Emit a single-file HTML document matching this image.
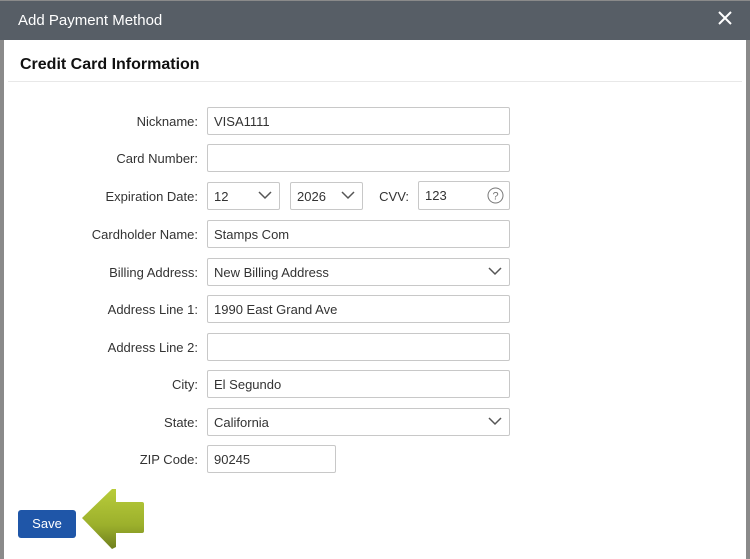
<!DOCTYPE html>
<html><head><style>
body{margin:0;width:750px;height:559px;overflow:hidden;background:#fff;font-family:"Liberation Sans",sans-serif;position:relative}
.frame{position:absolute;left:0;top:0;width:750px;height:559px;border-left:4px solid #8a8a8a;border-right:4px solid #8a8a8a;box-sizing:border-box}
.hdr{position:absolute;left:0;top:0;width:750px;height:40px;background:#575e66;border-top:1px solid #8a8a8a;box-sizing:border-box}
.hdr span{position:absolute;left:18px;top:11px;color:#fff;font-size:15px}
.x{position:absolute;right:16px;top:8px;width:18px;height:18px}
h2{position:absolute;left:20px;top:56px;margin:0;font-size:16px;font-weight:bold;color:#111}
.hr{position:absolute;left:8px;right:8px;top:81px;height:1px;background:#e8e8e8}
.lab{position:absolute;right:552px;font-size:13px;color:#333;text-align:right;white-space:nowrap}
.in{position:absolute;left:207px;width:303px;height:28px;border:1px solid #c8c8c8;border-radius:2px;box-sizing:border-box;font-size:13px;color:#333;padding:6px 0 0 6px}
.chev{position:absolute;right:7px;top:8px;width:14px;height:9px}
.save{position:absolute;left:18px;top:510px;width:58px;height:28px;background:#1f56a8;border-radius:3px;color:#fff;font-size:13px;text-align:center;line-height:28px}
</style></head><body>
<div class="frame"></div>
<div class="hdr"><span>Add Payment Method</span>
<svg class="x" viewBox="0 0 18 18"><path d="M3 3L15 15M15 3L3 15" stroke="#fff" stroke-width="2"/></svg></div>
<h2>Credit Card Information</h2>
<div class="hr"></div>
<div class="lab" style="top:114px">Nickname:</div><div class="in" style="top:107px">VISA1111</div>
<div class="lab" style="top:151px">Card Number:</div><div class="in" style="top:144px"></div>
<div class="lab" style="top:189px">Expiration Date:</div>
<div class="in" style="top:182px;width:73px">12<svg class="chev" viewBox="0 0 14 9"><path d="M1 1L7 7L13 1" fill="none" stroke="#555" stroke-width="1.5"/></svg></div>
<div class="in" style="top:182px;left:290px;width:73px">2026<svg class="chev" viewBox="0 0 14 9"><path d="M1 1L7 7L13 1" fill="none" stroke="#555" stroke-width="1.5"/></svg></div>
<div class="lab" style="top:189px;right:341px">CVV:</div>
<div class="in" style="top:181px;left:418px;width:92px;height:29px">123
<svg style="position:absolute;right:5px;top:5px" width="17" height="17" viewBox="0 0 17 17"><circle cx="8.5" cy="8.5" r="7.5" fill="none" stroke="#777" stroke-width="1"/><text x="8.5" y="12.5" text-anchor="middle" font-size="11" fill="#777" font-family="Liberation Sans">?</text></svg></div>
<div class="lab" style="top:227px">Cardholder Name:</div><div class="in" style="top:220px">Stamps Com</div>
<div class="lab" style="top:265px">Billing Address:</div><div class="in" style="top:258px">New Billing Address<svg class="chev" viewBox="0 0 14 9"><path d="M1 1L7 7L13 1" fill="none" stroke="#555" stroke-width="1.5"/></svg></div>
<div class="lab" style="top:302px">Address Line 1:</div><div class="in" style="top:295px">1990 East Grand Ave</div>
<div class="lab" style="top:340px">Address Line 2:</div><div class="in" style="top:333px"></div>
<div class="lab" style="top:377px">City:</div><div class="in" style="top:370px">El Segundo</div>
<div class="lab" style="top:415px">State:</div><div class="in" style="top:408px">California<svg class="chev" viewBox="0 0 14 9"><path d="M1 1L7 7L13 1" fill="none" stroke="#555" stroke-width="1.5"/></svg></div>
<div class="lab" style="top:452px">ZIP Code:</div><div class="in" style="top:445px;width:129px">90245</div>
<div class="save">Save</div>
<svg style="position:absolute;left:80px;top:486px" width="66" height="66" viewBox="0 0 66 66">
<defs><linearGradient id="g" x1="0" y1="0" x2="0" y2="1"><stop offset="0" stop-color="#b8cc3a"/><stop offset="0.6" stop-color="#9cb02c"/><stop offset="1" stop-color="#6f7f1e"/></linearGradient></defs>
<path d="M2 32L32 3L36 3L36 16L62 16Q64 16 64 18L64 45Q64 47 62 47L36 47L36 61L32 63Z" fill="url(#g)"/></svg>
</body></html>
